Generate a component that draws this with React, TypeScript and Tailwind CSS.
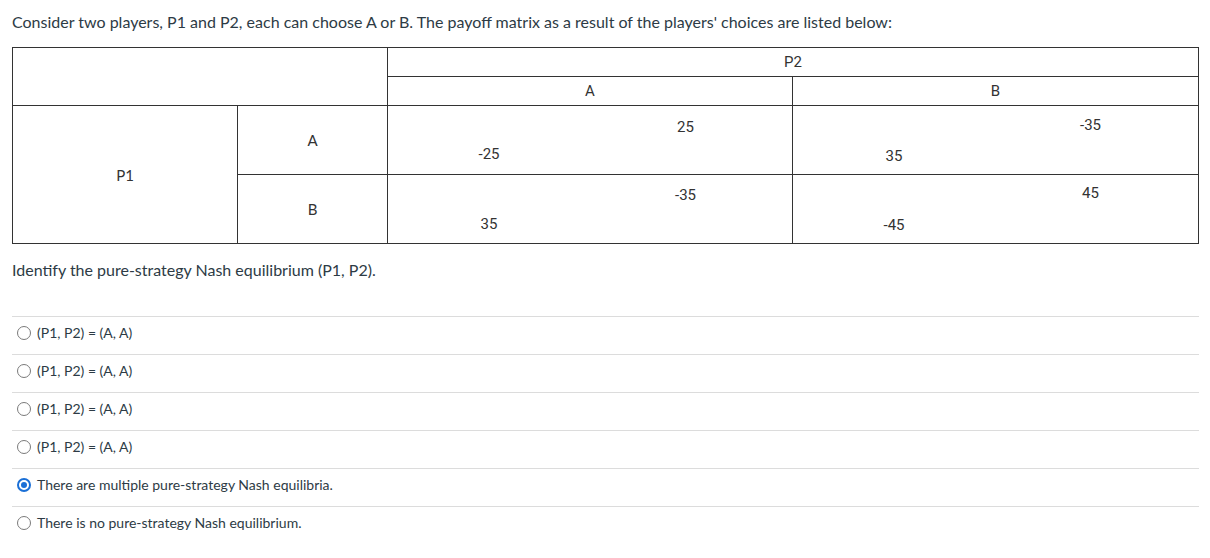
import React from "react";

const lato = { fontFamily: "Lato, 'Open Sans', sans-serif" };

function Val({ right, left, topOff, botOff }: { right: string; left: string; topOff: number; botOff: number }) {
  return (
    <div className="grid h-[68px] grid-cols-[202px_191px] grid-rows-[34px_34px]">
      <div />
      <div className="flex justify-center">
        <span className="leading-[18px]" style={{ marginTop: topOff - 9 }}>{right}</span>
      </div>
      <div className="flex justify-center">
        <span className="leading-[18px]" style={{ marginTop: botOff - 34 - 9 }}>{left}</span>
      </div>
      <div />
    </div>
  );
}

function Radio({ checked }: { checked?: boolean }) {
  if (checked)
    return (
      <span className="flex h-[14px] w-[14px] items-center justify-center rounded-full border-2 border-[#1a6fd6]">
        <span className="h-[6px] w-[6px] rounded-full bg-[#1a6fd6]" />
      </span>
    );
  return <span className="block h-[14px] w-[14px] rounded-full border-[1.5px] border-[#7a7a7a]" />;
}

export default function App() {
  const options = [
    { t: "(P1, P2) = (A, A)" },
    { t: "(P1, P2) = (A, A)" },
    { t: "(P1, P2) = (A, A)" },
    { t: "(P1, P2) = (A, A)" },
    { t: "There are multiple pure-strategy Nash equilibria.", c: true },
    { t: "There is no pure-strategy Nash equilibrium." },
  ];
  return (
    <div className="min-h-[558px] w-[1210px] bg-white px-[12px] pt-[10px] text-[#2d3b45]">
      <p className="text-[16px] leading-[24px]" style={lato}>
        Consider two players, P1 and P2, each can choose A or B. The payoff matrix as a result of the players' choices are listed below:
      </p>
      <table
        className="mt-[13px] w-[1187px] table-fixed border-collapse text-[15px] text-[#333]"
        style={{ fontFamily: "Roboto, 'Liberation Sans', sans-serif" }}
      >
        <colgroup>
          <col className="w-[225px]" />
          <col className="w-[150px]" />
          <col className="w-[405px]" />
          <col className="w-[406px]" />
        </colgroup>
        <tbody>
          <tr className="h-[29px]">
            <td colSpan={2} rowSpan={2} className="border border-[#333]" />
            <td colSpan={2} className="border border-[#333] text-center align-middle leading-[18px]">P2</td>
          </tr>
          <tr className="h-[29px]">
            <td className="border border-[#333] text-center align-middle leading-[18px]">A</td>
            <td className="border border-[#333] text-center align-middle leading-[18px]">B</td>
          </tr>
          <tr className="h-[69px]">
            <td rowSpan={2} className="border border-[#333] text-center align-middle leading-[18px]" style={lato}>P1</td>
            <td className="border border-[#333] text-center align-middle leading-[18px]" style={lato}>A</td>
            <td className="border border-[#333] p-0 align-top"><Val right="25" left="-25" topOff={21} botOff={48} /></td>
            <td className="border border-[#333] p-0 align-top"><Val right="-35" left="35" topOff={19} botOff={50} /></td>
          </tr>
          <tr className="h-[69px]">
            <td className="border border-[#333] text-center align-middle leading-[18px]" style={lato}>B</td>
            <td className="border border-[#333] p-0 align-top"><Val right="-35" left="35" topOff={20} botOff={49} /></td>
            <td className="border border-[#333] p-0 align-top"><Val right="45" left="-45" topOff={18} botOff={50} /></td>
          </tr>
        </tbody>
      </table>
      <p className="mt-[14px] text-[16px] leading-[24px]" style={lato}>
        Identify the pure-strategy Nash equilibrium (P1, P2).
      </p>
      <div className="mt-[34px] w-[1187px]" style={lato}>
        {options.map((o, i) => (
          <div key={i} className="flex h-[38px] items-start border-t border-[#dcdcdc] pt-[7px]">
            <div className="flex h-[18px] w-[25px] items-center pl-[5px]">
              <Radio checked={o.c} />
            </div>
            <span className="text-[14px] leading-[18px]">{o.t}</span>
          </div>
        ))}
      </div>
    </div>
  );
}
